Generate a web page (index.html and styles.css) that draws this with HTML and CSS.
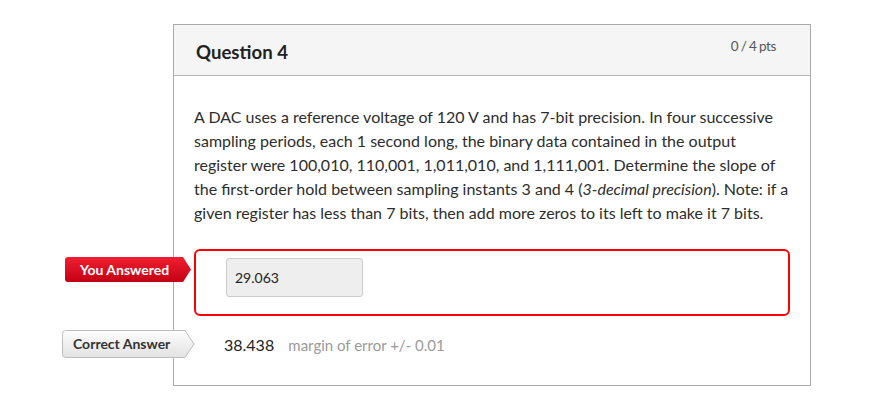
FILE: index.html
```html
<!DOCTYPE html>
<html>
<head>
<meta charset="utf-8">
<link rel="stylesheet" href="styles.css">
</head>
<body>
<div class="page">
  <div class="card">
    <div class="card-header">
      <h2 class="title">Question 4</h2>
      <div class="points">0 / 4 pts</div>
    </div>
    <div class="card-body">
      <p class="question">A DAC uses a reference voltage of 120 V and has 7-bit precision. In four successive sampling periods, each 1 second long, the binary data contained in the output register were 100,010, 110,001, 1,011,010, and 1,111,001. Determine the slope of the first-order hold between sampling instants 3 and 4 (<em>3-decimal precision</em>). Note: if a given register has less than 7 bits, then add more zeros to its left to make it 7 bits.</p>
      <div class="answer wrong">
        <div class="tag tag-red">
          <svg class="tag-bg" width="126" height="25" viewBox="0 0 126 25">
            <defs>
              <linearGradient id="gr" x1="0" y1="0" x2="0" y2="1">
                <stop offset="0" stop-color="#ef1f31"/>
                <stop offset="1" stop-color="#c50014"/>
              </linearGradient>
            </defs>
            <path d="M3,0 H118 L126,12.5 L118,25 H3 Q0,25 0,22 V3 Q0,0 3,0 Z" fill="url(#gr)"/>
          </svg>
          <span class="tag-text">You Answered</span>
        </div>
        <div class="input-box">29.063</div>
      </div>
      <div class="answer correct">
        <div class="tag tag-gray">
          <svg class="tag-bg" width="133" height="28" viewBox="0 0 133 28">
            <defs>
              <linearGradient id="gg" x1="0" y1="0" x2="0" y2="1">
                <stop offset="0" stop-color="#fdfdfd"/>
                <stop offset="1" stop-color="#e2e2e2"/>
              </linearGradient>
            </defs>
            <path d="M3.5,0.5 H123 L132,14 L123,27.5 H3.5 Q0.5,27.5 0.5,24.5 V3.5 Q0.5,0.5 3.5,0.5 Z" fill="url(#gg)" stroke="#bdbdbd" stroke-width="1"/>
          </svg>
          <span class="tag-text">Correct Answer</span>
        </div>
        <span class="value">38.438</span>
        <span class="margin">margin of error +/- 0.01</span>
      </div>
    </div>
  </div>
</div>
</body>
</html>
```

FILE: styles.css
```css
html, body {
  margin: 0;
  padding: 0;
  background: #ffffff;
}

body {
  font-family: Lato, "Liberation Sans", sans-serif;
  color: #2d2d2d;
}

.page {
  padding: 24px 0 0 173px;
}

.card {
  width: 636px;
  border: 1px solid #aaaaaa;
  background: #ffffff;
}

.card-header {
  position: relative;
  height: 51px;
  background: #f5f5f5;
  border-bottom: 1px solid #b5b5b5;
  display: flex;
  align-items: center;
  padding: 3px 22px 0 22px;
  box-sizing: border-box;
}

.title {
  margin: 0;
  font-size: 18.6px;
  font-weight: 700;
  color: #222222;
  line-height: 24px;
}

.points {
  position: absolute;
  top: 11px;
  right: 34px;
  font-size: 13.5px;
  line-height: 20px;
  letter-spacing: -0.4px;
  word-spacing: -0.5px;
  color: #555555;
}

.card-body {
  padding: 29px 20px 28px 20px;
}

.question {
  margin: 0 0 24px 0;
  font-size: 16px;
  line-height: 24px;
  color: #2d2d2d;
}

.question em {
  font-style: italic;
}

.answer {
  position: relative;
}

.answer.wrong {
  border: 2px solid #ff0000;
  border-radius: 6px;
  padding: 7px 30px 17px 30px;
}

.input-box {
  width: 127px;
  height: 37px;
  background: #eeeeee;
  border: 1px solid #cccccc;
  border-radius: 3px;
  padding: 0 0 0 8px;
  font-size: 14px;
  line-height: 37px;
  color: #222222;
}

.answer.correct {
  margin-top: 17px;
  padding-left: 30px;
  font-size: 16px;
  line-height: 24px;
}

.value {
  color: #222222;
  margin-right: 10px;
}

.margin {
  color: #9a9a9a;
  font-size: 15px;
}

.tag {
  position: absolute;
  display: flex;
  align-items: center;
  font-size: 14px;
  font-weight: 700;
}

.tag-bg {
  position: absolute;
  left: 0;
  top: 0;
  display: block;
}

.tag-text {
  position: relative;
}

.tag-red {
  left: -131px;
  top: 6px;
  width: 126px;
  height: 25px;
  color: #ffffff;
}

.tag-red .tag-text {
  padding-left: 15px;
}

.tag-gray {
  left: -132px;
  top: -3px;
  width: 133px;
  height: 28px;
  color: #333333;
}

.tag-gray .tag-text {
  padding-left: 11px;
}
```
